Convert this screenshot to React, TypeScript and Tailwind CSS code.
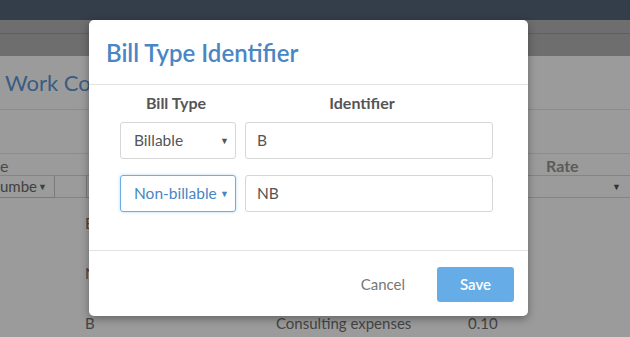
export default function App() {
  return (
    <div className="relative w-[630px] h-[337px] overflow-hidden bg-[#9b9b9b] font-['Lato',sans-serif]">
      {/* background page */}
      <div className="h-[20px] bg-[#343d4a]" />
      <div className="h-[36px] bg-[#6e6e6e]">
        <div className="h-[14px] border-b border-[#5f5f5f]" />
      </div>
      <div className="h-[54px] border-b border-[#8c8c8c] flex items-center pl-[5px] text-[22px] text-[#3a5b82] whitespace-nowrap">
        Work Codes
      </div>
      <div className="h-[44px] border-b border-[#8c8c8c]" />
      <div className="grid grid-cols-[80px_190px_192px_78px_90px] h-[22px] border-b border-[#848484] text-[16px] leading-[18px]">
        <div className="flex items-end text-[#4a4a4a]">e</div>
        <div />
        <div />
        <div />
        <div className="flex items-end pl-[6px] font-bold text-[#5b5b5b]">Rate</div>
      </div>
      <div className="grid grid-cols-[80px_190px_192px_78px_90px] h-[22px] border-b border-[#848484] text-[15px]">
        <div className="flex">
          <div className="w-[55px] h-[22px] border border-l-0 border-t-0 border-[#7a7a7a] flex items-center justify-between pr-[7px] text-[#404040] whitespace-nowrap">
            <span>umbe</span>
            <span className="text-[9px]">▼</span>
          </div>
        </div>
        <div className="pl-[6px]">
          <div className="h-[22px] border border-t-0 border-[#7a7a7a]" />
        </div>
        <div />
        <div />
        <div className="h-[22px] flex items-center justify-end pr-[9px] text-[9px] text-[#333]">▼</div>
      </div>
      <div className="text-[15px] text-[#444]">
        <div className="grid grid-cols-[80px_190px_192px_78px_90px] h-[50px] items-center">
          <div />
          <div className="pl-[5px]">B</div>
        </div>
        <div className="grid grid-cols-[80px_190px_192px_78px_90px] h-[50px] items-center">
          <div />
          <div className="pl-[5px]">N</div>
        </div>
        <div className="grid grid-cols-[80px_190px_192px_78px_90px] h-[50px] items-center">
          <div />
          <div className="pl-[5px]">B</div>
          <div className="pl-[6px]">Consulting expenses</div>
          <div className="pl-[6px]">0.10</div>
        </div>
      </div>

      {/* modal */}
      <div className="absolute left-[89px] top-[20px] w-[439px] bg-white rounded-[5px] shadow-[0_3px_9px_rgba(0,0,0,0.35)]">
        <div className="h-[65px] border-b border-[#e3e3e3] flex items-center pl-[17px] pt-[2px]">
          <h2 className="text-[24px] font-semibold text-[#4a86c4] leading-none">Bill Type Identifier</h2>
        </div>
        <div className="pl-[31px] pt-[9px] pb-[38px]">
          <div className="flex gap-[9px] text-[16px] font-bold text-[#555] leading-[18px]">
            <div className="w-[116px] text-center pr-[4px]">Bill Type</div>
            <div className="w-[248px] text-center pr-[14px]">Identifier</div>
          </div>
          <div className="mt-[10px] flex flex-col gap-[16px] text-[15.5px]">
            <div className="flex gap-[9px]">
              <div className="w-[116px] h-[37px] border border-[#d6d6d6] rounded-[3px] flex items-center justify-between pl-[13px] pr-[6px] text-[#555] whitespace-nowrap">
                <span>Billable</span>
                <span className="text-[9px] text-[#555]">▼</span>
              </div>
              <div className="w-[248px] h-[37px] border border-[#d6d6d6] rounded-[3px] flex items-center pl-[11px] text-[#555]">B</div>
            </div>
            <div className="flex gap-[9px]">
              <div className="w-[116px] h-[37px] border border-[#66afe9] rounded-[3px] shadow-[0_0_3px_rgba(102,175,233,0.5)] flex items-center justify-between pl-[13px] pr-[6px] text-[#4a86c4] whitespace-nowrap">
                <span>Non-billable</span>
                <span className="text-[9px]">▼</span>
              </div>
              <div className="w-[248px] h-[37px] border border-[#d6d6d6] rounded-[3px] flex items-center pl-[11px] text-[#555]">NB</div>
            </div>
          </div>
        </div>
        <div className="h-[66px] border-t border-[#e3e3e3] flex items-center justify-end pr-[14px] pt-[1px]">
          <span className="text-[15px] text-[#777] mr-[32px]">Cancel</span>
          <div className="w-[77px] h-[35px] rounded-[3px] bg-[#66ade8] flex items-center justify-center text-[15px] font-semibold text-white">Save</div>
        </div>
      </div>
    </div>
  );
}
